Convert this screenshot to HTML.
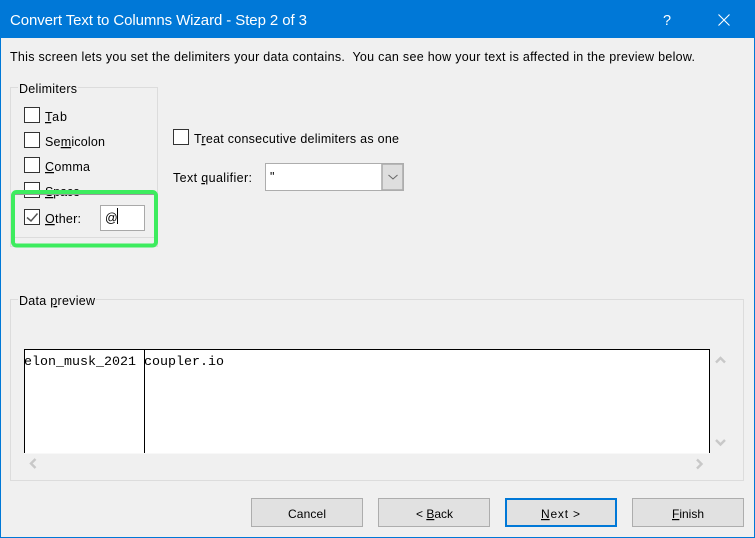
<!DOCTYPE html>
<html lang="en">
<head>
<meta charset="utf-8">
<title>Convert Text to Columns Wizard - Step 2 of 3</title>
<style>
html,body{margin:0;padding:0;background:#f0f0f0;width:755px;height:538px;overflow:hidden}
svg{display:block;font-family:"Liberation Sans",sans-serif;font-size:12.5px;fill:#000}
.u{text-decoration:underline}
.cb{fill:#fff;stroke:#333;stroke-width:1}
.grp{fill:none;stroke:#dcdcdc;stroke-width:1}
.btn{fill:#e1e1e1;stroke:#adadad;stroke-width:1}
.arr{fill:none;stroke:#c8c8c8;stroke-width:2.4}
.bt{font-size:12px}
.mono{font-family:"Liberation Mono",monospace;font-size:13.33px}
</style>
</head>
<body>
<svg width="755" height="538" viewBox="0 0 755 538" xmlns="http://www.w3.org/2000/svg">
<!-- window -->
<rect x="0" y="0" width="755" height="538" fill="#f0f0f0"/>
<rect x="0" y="0" width="755" height="38" fill="#0078d7"/>
<rect x="0" y="0" width="1" height="538" fill="#0078d7"/>
<rect x="754" y="0" width="1" height="538" fill="#0078d7"/>
<rect x="0" y="537" width="755" height="1" fill="#0078d7"/>
<text x="10" y="25" font-size="15" style="fill:#fff" textLength="297">Convert Text to Columns Wizard - Step 2 of 3</text>
<text x="663" y="25" font-size="14.500" style="fill:#fff">?</text>
<path d="M718.500 14.500 L729.500 25.500 M729.500 14.500 L718.500 25.500" stroke="#fff" stroke-width="1.100" fill="none"/>

<text x="10" y="61" textLength="685">This screen lets you set the delimiters your data contains.&#160; You can see how your text is affected in the preview below.</text>

<!-- Delimiters group -->
<rect class="grp" x="10.500" y="87.500" width="147" height="159"/>
<rect x="18" y="82" width="60" height="12" fill="#f0f0f0"/>
<text x="19" y="93" textLength="58">Delimiters</text>
<line x1="11" y1="237.500" x2="157" y2="237.500" stroke="#dcdcdc"/>

<rect class="cb" x="24.500" y="107.500" width="15" height="15"/>
<text x="45" y="121" textLength="22"><tspan class="u">T</tspan>ab</text>
<rect class="cb" x="24.500" y="132.500" width="15" height="15"/>
<text x="45" y="146" textLength="60">Se<tspan class="u">m</tspan>icolon</text>
<rect class="cb" x="24.500" y="157.500" width="15" height="15"/>
<text x="45" y="171" textLength="45"><tspan class="u">C</tspan>omma</text>
<rect class="cb" x="24.500" y="182.500" width="15" height="15"/>
<text x="45" y="196" textLength="35"><tspan class="u">S</tspan>pace</text>
<rect class="cb" x="24.500" y="209.500" width="15" height="15"/>
<path d="M27 217.500 L31 221 L37.500 213.500" fill="none" stroke="#555" stroke-width="1.500"/>
<text x="45" y="223" textLength="36"><tspan class="u">O</tspan>ther:</text>
<rect x="100.500" y="205.500" width="44" height="25" fill="#fff" stroke="#a9a9a9"/>
<text x="105" y="222" textLength="11">@</text>
<rect x="117" y="208" width="1" height="16" fill="#000"/>

<!-- Treat consecutive / qualifier -->
<rect class="cb" x="173.500" y="129.500" width="15" height="15"/>
<text x="194" y="143" textLength="205">T<tspan class="u">r</tspan>eat consecutive delimiters as one</text>
<text x="173" y="182" textLength="79">Text <tspan class="u">q</tspan>ualifier:</text>
<rect x="265.500" y="163.500" width="138" height="27" fill="#fff" stroke="#adadad"/>
<rect x="382" y="164" width="21" height="26" fill="#dedede" stroke="#adadad" stroke-width="1.600"/>
<path d="M388.500 175 L393 179 L397.500 175" fill="none" stroke="#666" stroke-width="1"/>
<text x="270" y="181">"</text>

<!-- Data preview -->
<rect class="grp" x="10.500" y="299.500" width="733" height="181"/>
<rect x="18" y="294" width="78" height="12" fill="#f0f0f0"/>
<text x="19" y="305" textLength="76">Data <tspan class="u">p</tspan>review</text>
<rect x="24" y="349" width="686" height="104.500" fill="#fff"/>
<path d="M24.500 453 V349.500 H709.500 V453 M144.500 350 V453" fill="none" stroke="#000" stroke-width="1"/>
<text class="mono" x="24" y="365">elon_musk_2021</text>
<text class="mono" x="144" y="365">coupler.io</text>
<path class="arr" d="M716 362.500 L720.500 358 L725 362.500"/>
<path class="arr" d="M716 440 L720.500 444.500 L725 440"/>
<path class="arr" d="M35.500 459 L31 463.500 L35.500 468"/>
<path class="arr" d="M697 459.500 L701.500 464 L697 468.500"/>

<!-- Buttons -->
<rect class="btn" x="251.500" y="498.500" width="111" height="28"/>
<text class="bt" x="288" y="518" textLength="38">Cancel</text>
<rect class="btn" x="378.500" y="498.500" width="111" height="28"/>
<text class="bt" x="416" y="518" textLength="37">&lt; <tspan class="u">B</tspan>ack</text>
<rect x="506" y="499" width="110" height="27" fill="#e1e1e1" stroke="#0078d7" stroke-width="2"/>
<text class="bt" x="541" y="518" textLength="39"><tspan class="u">N</tspan>ext &gt;</text>
<rect class="btn" x="632.500" y="498.500" width="111" height="28"/>
<text class="bt" x="672" y="518" textLength="32"><tspan class="u">F</tspan>inish</text>

<!-- Green highlight -->
<path d="M15 194.500 H154" stroke="#9a9a9a" stroke-width="1" fill="none"/>
<rect x="13" y="192" width="143" height="53.500" rx="3.500" ry="3.500" fill="none" stroke="#3dec5e" stroke-width="4"/>
</svg>
</body>
</html>
